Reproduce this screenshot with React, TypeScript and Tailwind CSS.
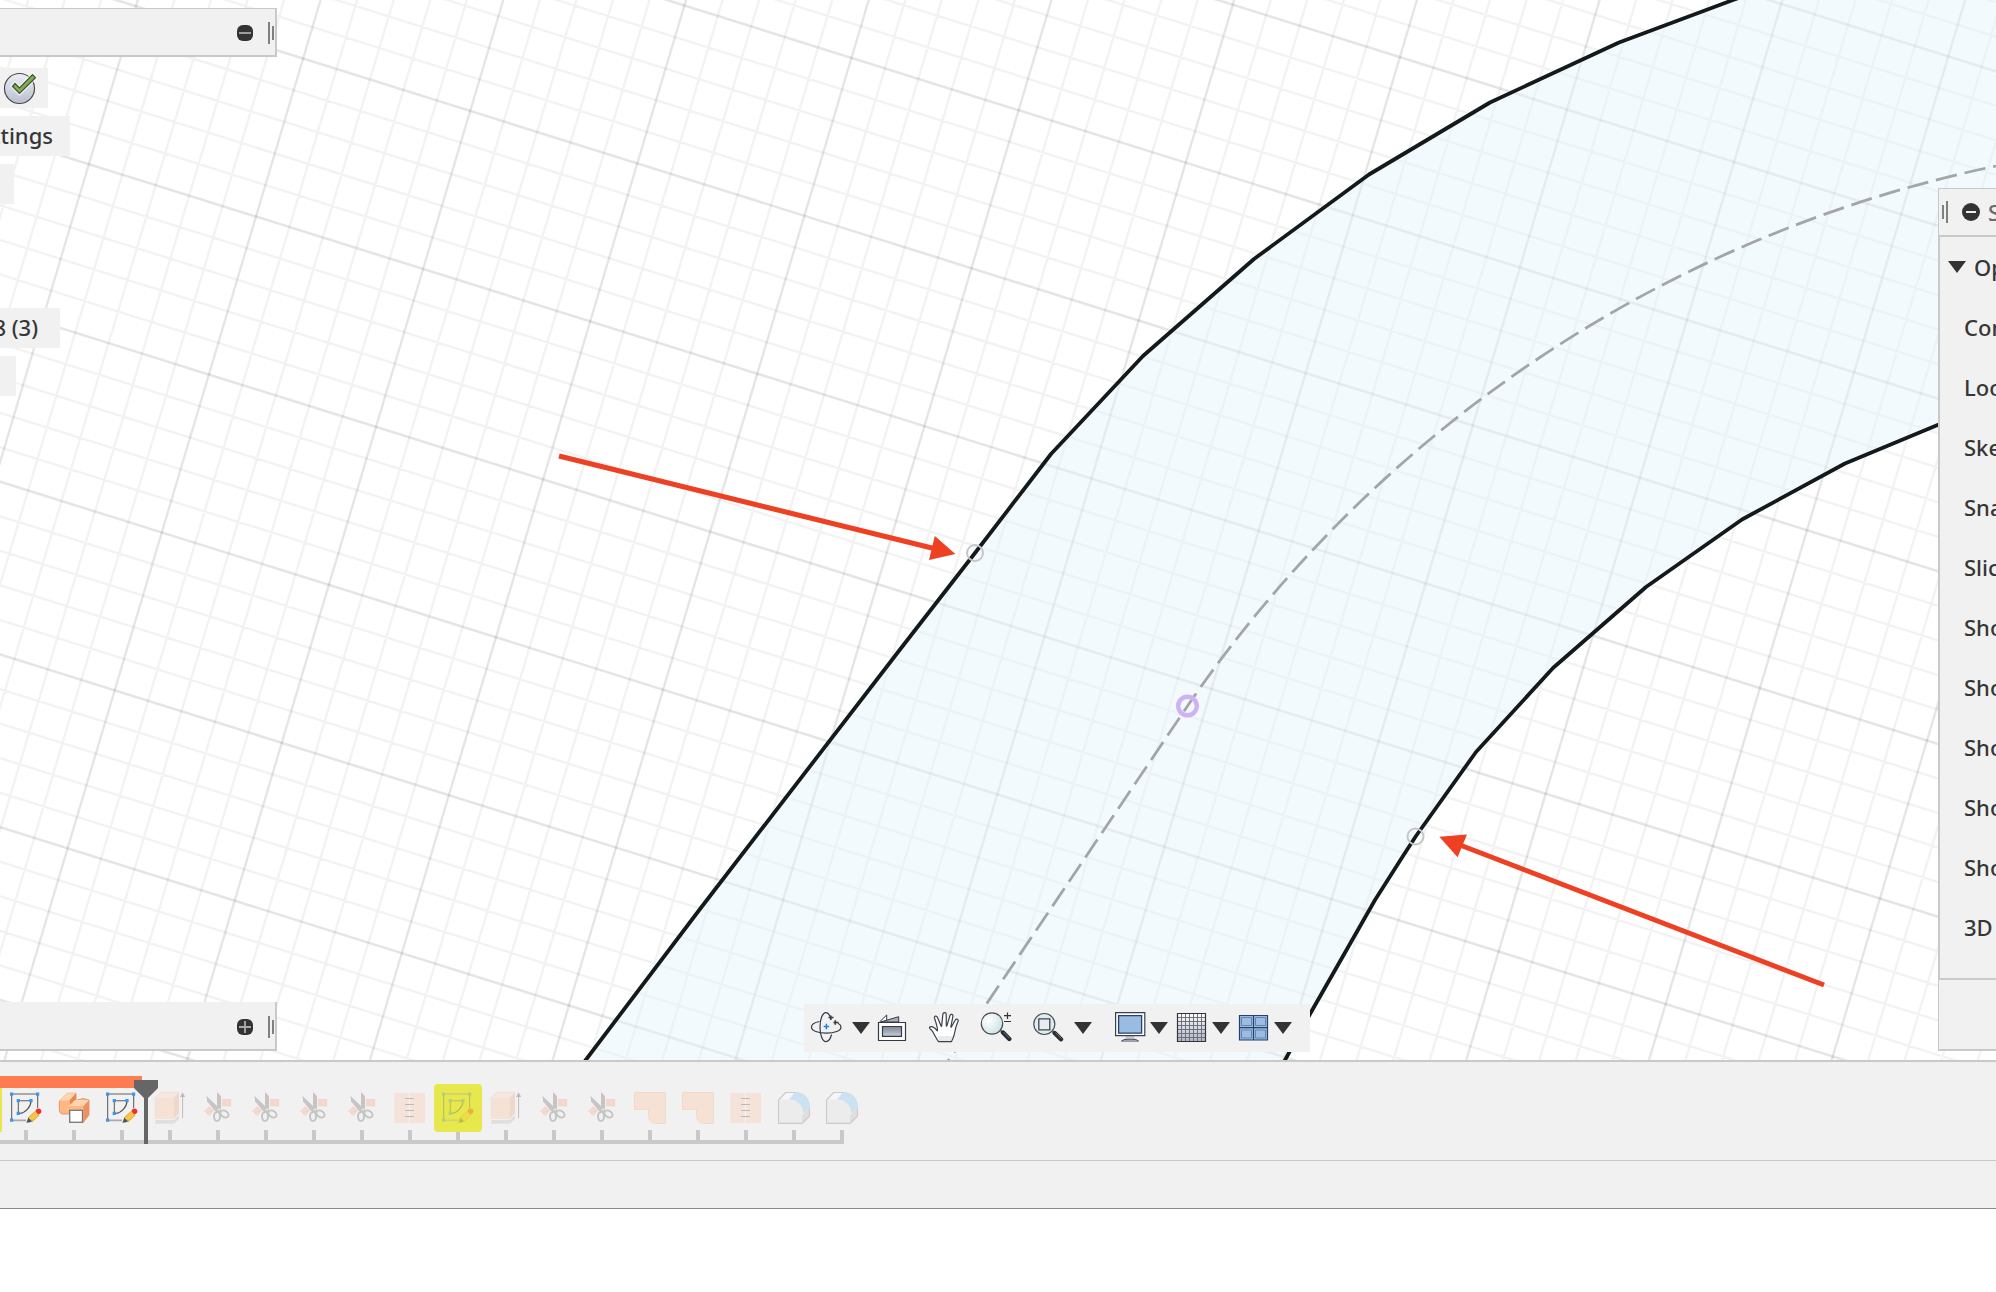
import React from 'react';
import clsx from 'clsx';

// Sketch plane: origin plus the two major grid vectors, in canvas pixels
const ORIGIN = [114.7, 690.4];
const U = [167.1, 52.4];
const V = [-47.1, 157.95];
const DIVISIONS = 5;

const gridPath = (step: number[], along: number[], major: boolean) => {
    let d = '';
    for (let i = -120; i <= 120; i++) {
        if ((i % DIVISIONS === 0) !== major) continue;
        const x = ORIGIN[0] + (step[0] * i) / DIVISIONS;
        const y = ORIGIN[1] + (step[1] * i) / DIVISIONS;
        d += `M${(x - along[0] * 24).toFixed(1)} ${(y - along[1] * 24).toFixed(1)}L${(x + along[0] * 24).toFixed(1)} ${(y + along[1] * 24).toFixed(1)}`;
    }
    return d;
};

const MINOR_GRID = gridPath(U, V, false) + gridPath(V, U, false);
const MAJOR_STEEP = gridPath(U, V, true);
const MAJOR_SHALLOW = gridPath(V, U, true);

const OUTER = '585,1061 700,909 900,649.5 975,553 1051,454 1143,356 1254,259 1369,174.5 1490,102.5 1619,42.5 1733,0 1800,-24';
const INNER = '1284,1062 1310,1014 1375,900 1403,856 1416,836 1476,752 1553,668 1646,587 1742,519.5 1845,463.5 1940,424 2010,396';
const INNER_REVERSED = INNER.split(' ').reverse().join(' ');

const SketchCanvas: React.FC = () => (
    <svg className="absolute inset-0 w-full h-full" aria-hidden="true">
        <g fill="none" stroke="#000">
            <path d={MINOR_GRID} strokeWidth="2.4" strokeOpacity="0.05" />
            <path d={MAJOR_STEEP} strokeWidth="2.4" strokeOpacity="0.1" />
            <path d={MAJOR_SHALLOW} strokeWidth="2.6" strokeOpacity="0.1" />
        </g>
        {/* Profile fill sits over the grid and softens it */}
        <polygon points={`${OUTER} 2100,-24 2100,396 ${INNER_REVERSED}`} fill="#e4f5fd" fillOpacity="0.45" />

        {/* Centre line */}
        <path
            d="M946 1064L1187.5 706A1302 1302 0 0 1 1996 166"
            fill="none"
            stroke="#a3a5a6"
            strokeWidth="2.8"
            strokeDasharray="21.5 7.9"
            strokeDashoffset="-14"
        />

        {/* Profile edges */}
        <g fill="none" stroke="#14191b" strokeWidth="3.8" strokeLinejoin="round">
            <polyline points={OUTER} />
            <polyline points={INNER} />
        </g>

        {/* Sketch points */}
        <g fill="none">
            <circle cx="975" cy="553" r="8" stroke="#c4c6c7" strokeWidth="2" />
            <circle cx="1415.5" cy="836.5" r="8" stroke="#c4c6c7" strokeWidth="2" />
            <circle cx="1187.5" cy="706" r="9.3" stroke="#cdb3f5" strokeWidth="4.4" />
        </g>

        {/* Annotation arrows */}
        <g fill="#ee4023" stroke="none">
            <path d="M559 456L934 548.5" stroke="#ee4023" strokeWidth="5" />
            <path d="M955.4 553.9L934.8 536L929 560Z" />
            <path d="M1824 985L1460 845" stroke="#ee4023" strokeWidth="5" />
            <path d="M1439.3 836.8L1467 834.6L1457.6 857.2Z" />
        </g>
    </svg>
);

/* ---------- Timeline icons ---------- */

const SketchIcon = () => (
    <svg viewBox="0 0 48 48" className="w-12 h-12">
        <path d="M11 10h24M11 36.3h13" stroke="#a9a9a9" strokeWidth="1.8" />
        <path d="M9.7 11v25M35.7 11v13M16.3 17v12" stroke="#555" strokeWidth="1" />
        <path d="M17 16.7h12" stroke="#777" strokeWidth="1.2" />
        <path d="M29 17c0 6-6 12-11.5 12.5" fill="none" stroke="#555" strokeWidth="1.2" />
        <path d="M8 8.5h3.2v3.2h-3.2zM34 8.5h3.2v3.2h-3.2zM8 34.6h3.2v3.2h-3.2zM14.7 15h3.2v3.2h-3.2zM27.4 15h3.2v3.2h-3.2zM14.7 27.7h3.2v3.2h-3.2z" fill="#3b97ee" />
        <circle cx="36.5" cy="27.2" r="2.8" fill="#f03030" />
        <path d="M26.2 33.8L33.2 27.4L37.2 31.2L30 37.8Z" fill="#fbc345" stroke="#c9902c" strokeWidth="0.7" />
        <path d="M26.2 33.8L30 37.2L28.4 38.2L24.4 38.8Z" fill="#555" />
    </svg>
);

const FormIcon = () => (
    <svg viewBox="0 0 48 48" className="w-12 h-12">
        <path d="M9.3 17L17.5 9.3H26V16.5L33 14.5L39 16V31L33.3 38.3L19 30H12Q9.3 29 9.3 26Z" fill="#ffb784" stroke="#e08a55" strokeWidth="0.8" />
        <path d="M9.3 16.5L17.5 9.3H26L19.5 16.5Z" fill="#ffd5b0" />
        <path d="M19.5 16.5L26 9.3V15.5L20.5 21Z" fill="#ea8650" />
        <path d="M19 22L25 16H38.5L33.5 22Z" fill="#ffd5b0" />
        <path d="M33.5 22L39 16.5V31L33.5 38Z" fill="#ee9160" />
        <rect x="19.7" y="26.3" width="12.8" height="12" fill="#fff" stroke="#777" strokeWidth="1.3" />
    </svg>
);

const ExtrudeIcon = () => (
    <svg viewBox="0 0 48 48" className="w-12 h-12">
        <path d="M9.3 13.7L14.5 8.3H33L27.5 13.7Z" fill="#f4e8e0" />
        <path d="M9.3 13.7H27.5V35H9.3Z" fill="#f5e2d6" />
        <path d="M27.5 13.7L33 8.3V29.5L27.5 35Z" fill="#f1d6ca" />
        <path d="M9.3 35V13.7L14.5 8.3H33" fill="none" stroke="#f0dccf" strokeWidth="0.8" />
        <path d="M9.3 36H28L33 31V35L28 39.7H9.3Z" fill="#dfdfdf" />
        <path d="M36.6 34V10" stroke="#c0c0c0" strokeWidth="1.1" />
        <path d="M34 13L36.6 8.3L39.2 13Z" fill="#bcbcbc" />
    </svg>
);

const TrimIcon = () => (
    <svg viewBox="0 0 48 48" className="w-12 h-12">
        <path d="M28.3 15.3h8.4v6.7h-8.4z" fill="#f0dacd" stroke="#ecd0c0" strokeWidth="0.6" />
        <path d="M10 27L15.3 22L20.3 26.5L15 32Z" fill="#f0dacd" />
        <path d="M12.7 12L27 26L25 29L21.5 27.5L13 17.3Z" fill="#c5c5c5" />
        <path d="M23 8.3L27 12V26L23 28Z" fill="#c5c5c5" />
        <ellipse cx="23" cy="32.5" rx="3" ry="4.6" fill="none" stroke="#c5c5c5" strokeWidth="2" />
        <ellipse cx="30.5" cy="30" rx="4.4" ry="3.1" transform="rotate(35 30.5 30)" fill="none" stroke="#c5c5c5" strokeWidth="2" />
        <circle cx="25" cy="25.5" r="1.2" fill="#e4e4e4" />
    </svg>
);

const StitchIcon = () => (
    <svg viewBox="0 0 48 48" className="w-12 h-12">
        <path d="M8 9h31v30h-31z" fill="#f5e2d8" />
        <path d="M23.5 9v30" stroke="#f8f4f1" strokeWidth="1" />
        <path d="M19 14.5h9M19 20.5h9M19 26.5h9M19 32.5h9" stroke="#b9bbbd" strokeWidth="1.1" />
    </svg>
);

const FlangeIcon = () => (
    <svg viewBox="0 0 48 48" className="w-12 h-12">
        <path d="M8.5 8.5H39.5V39.5H30Q22.5 38.5 22.5 31.5V25.5H8.5Z" fill="#f5e2d5" stroke="#f2d9c8" strokeWidth="1" />
    </svg>
);

const FilletIcon = () => (
    <svg viewBox="0 0 48 48" className="w-12 h-12">
        <path d="M8.5 16L15.7 8.5H26L20 15.5Q31 16 34 28L39.5 23V32L32.3 39.4H8.5Z" fill="#ececec" />
        <path d="M10 15.5L16 9H25L19.5 15.2Z" fill="#f6f6f6" />
        <path d="M32.3 31L39.5 24V32L32.3 39.4Z" fill="#dedede" />
        <path d="M25.5 8.5C34 8.5 39 14 39.7 22.7L34 28.5C32.5 20 27 15 20 15Z" fill="#cde2f0" stroke="#bcd8ea" strokeWidth="0.6" />
        <path d="M25.5 8.5H15.7L8.5 16V39.4H32.3L39.5 32V24" fill="none" stroke="#cacaca" strokeWidth="1.1" />
    </svg>
);

interface Feature {
    name: string;
    icon: React.FC;
    highlighted?: boolean;
}

const features: Feature[] = [
    { name: 'Sketch', icon: SketchIcon },
    { name: 'Form', icon: FormIcon },
    { name: 'Sketch', icon: SketchIcon },
    { name: 'Extrude', icon: ExtrudeIcon },
    { name: 'Trim', icon: TrimIcon },
    { name: 'Trim', icon: TrimIcon },
    { name: 'Trim', icon: TrimIcon },
    { name: 'Trim', icon: TrimIcon },
    { name: 'Stitch', icon: StitchIcon },
    { name: 'Sketch', icon: SketchIcon, highlighted: true },
    { name: 'Extrude', icon: ExtrudeIcon },
    { name: 'Trim', icon: TrimIcon },
    { name: 'Trim', icon: TrimIcon },
    { name: 'Flange', icon: FlangeIcon },
    { name: 'Flange', icon: FlangeIcon },
    { name: 'Stitch', icon: StitchIcon },
    { name: 'Fillet', icon: FilletIcon },
    { name: 'Fillet', icon: FilletIcon },
];

/* ---------- Navigation bar icons ---------- */

const OrbitIcon = () => (
    <svg viewBox="0 0 32 32" className="w-8 h-8" fill="none" stroke="#333a44" strokeWidth="1.2">
        <path d="M9.5 9.5C4.5 10.3 1.5 12.5 1.5 15.2C1.5 18.6 8 21.2 16.3 21.2S31 18.6 31 15.2C31 13.5 29.8 12.2 28 11.2" />
        <path d="M20 4.5C19 2 17.6 0.6 15.9 0.6C12.6 0.6 10 7 10 15.2S12.6 29.6 15.9 29.6C18.5 29.6 20.7 26 21.5 22.5" />
        <path d="M18.5 5.5h5M20.8 3.5v4.5M23.5 10.5h5M25.3 8.2v4.5" strokeWidth="1.6" />
        <path d="M13.7 14.5h5.4M16.4 11.8v5.4" stroke="#1f7fe8" strokeWidth="1.5" />
    </svg>
);

const LookAtIcon = () => (
    <svg viewBox="0 0 32 32" className="w-8 h-8" stroke="#333a44" strokeWidth="1.2">
        <defs>
            <linearGradient id="look" x1="0" y1="0" x2="0" y2="1">
                <stop offset="0" stopColor="#7d8694" />
                <stop offset="1" stopColor="#c9ced8" />
            </linearGradient>
        </defs>
        <path d="M3.5 10L10.7 3V8.5" fill="#fff" strokeWidth="1" />
        <path d="M4.5 10L22.7 4.7V10Z" fill="#a9afb9" strokeWidth="1" />
        <path d="M2.5 10.5h27v18h-27z" fill="#fff" />
        <path d="M6.5 14.5h19v9.8h-19z" fill="url(#look)" />
    </svg>
);

const PanIcon = () => (
    <svg viewBox="0 0 32 32" className="w-8 h-8">
        <path
            d="M10.5 29.6C8 26 6 22 4.5 19.3C3.5 17.8 1.2 16.8 1.5 15.3C2.5 13.8 6 14.5 9.3 18.8C9.8 17.5 8.5 12 6.5 6C6 4 8.6 3.3 9.4 5.3L13.2 14.3L13.6 14.2L14.9 2.2C15.2 0 18.2 0.2 18.2 2.3L18.3 14L18.8 14.1L22 3.5C22.7 1.5 25.2 2.3 24.9 4.3L22.8 15L23.2 15.2L27.3 8C28.5 6.3 30.7 7.5 30 9.3C28 14 27 18 26.6 21C26.2 24.5 24.5 26.5 23.5 29.6Z"
            fill="#fff"
            stroke="#3b4049"
            strokeWidth="1.2"
            strokeLinejoin="round"
        />
        <path d="M11.5 29h11.5l2-5h-15z" fill="#dfe1e6" opacity="0.7" />
    </svg>
);

const ZoomIcon = () => (
    <svg viewBox="0 0 32 32" className="w-8 h-8">
        <defs>
            <radialGradient id="lens" cx="0.35" cy="0.35" r="0.8">
                <stop offset="0" stopColor="#ffffff" />
                <stop offset="1" stopColor="#c6dfe0" />
            </radialGradient>
        </defs>
        <path d="M20 18L23 20.5" stroke="#777" strokeWidth="2" />
        <path d="M23 20.5L29.3 27" stroke="#262b33" strokeWidth="4.4" strokeLinecap="round" />
        <path d="M23.5 20L29.5 26.3" stroke="#69707c" strokeWidth="1" />
        <circle cx="12" cy="11.5" r="10.7" fill="url(#lens)" stroke="#4a4f57" strokeWidth="1.2" />
        <path d="M24 3.7h7M27.5 0.5v6.5M24 9.5h7" stroke="#333" strokeWidth="1.2" />
    </svg>
);

const FitIcon = () => (
    <svg viewBox="0 0 32 32" className="w-8 h-8">
        <path d="M20 19L23 21.5" stroke="#777" strokeWidth="2" />
        <path d="M22.7 21L29 27.3" stroke="#2b2d30" strokeWidth="4.4" strokeLinecap="round" />
        <path d="M23.5 20.7L29.5 26.6" stroke="#777" strokeWidth="1" />
        <circle cx="12.3" cy="12" r="10.5" fill="#dfeeee" stroke="#4a4f57" strokeWidth="1.2" />
        <path d="M6.8 6.8h11v11h-11z" fill="#e9ebf2" stroke="#3f444d" strokeWidth="1.3" />
    </svg>
);

const DisplayIcon = () => (
    <svg viewBox="0 0 32 32" className="w-8 h-8">
        <path d="M12 23.5H20L21 28H11Z" fill="#c9ccd2" />
        <path d="M7.5 29Q9 27.3 13 27.3H19Q23 27.3 24.5 29Z" fill="#fff" stroke="#444a55" strokeWidth="1" />
        <path d="M1.6 0.6h29.2v23h-29.2z" fill="#fff" stroke="#3a404b" strokeWidth="1.2" />
        <path d="M4.6 3.6h23v17.5h-23z" fill="#9bbce2" stroke="#24416f" strokeWidth="1.3" />
    </svg>
);

const GridIcon = () => (
    <svg viewBox="0 0 32 32" className="w-8 h-8">
        <defs>
            <linearGradient id="gridfill" x1="0" y1="0" x2="0" y2="1">
                <stop offset="0" stopColor="#ffffff" />
                <stop offset="1" stopColor="#aeb5c6" />
            </linearGradient>
        </defs>
        <path d="M1.5 1.5h28v28h-28z" fill="url(#gridfill)" stroke="#333" strokeWidth="1.2" />
        <path
            d="M5.5 2v27M9.5 2v27M13.5 2v27M17.5 2v27M21.5 2v27M25.5 2v27M2 5.5h27M2 9.5h27M2 13.5h27M2 17.5h27M2 21.5h27M2 25.5h27"
            stroke="#6e727b"
            strokeWidth="1"
        />
    </svg>
);

const ViewportsIcon = () => (
    <svg viewBox="0 0 32 32" className="w-8 h-8">
        <path d="M1.5 3.5h28v24.5h-28z" fill="#9dbce0" stroke="#24416f" strokeWidth="1.2" />
        <path d="M3.5 5.5h10v8h-10zM17.5 5.5h10v8h-10zM3.5 18h10v8h-10zM17.5 18h10v8h-10z" fill="none" stroke="#6285b4" strokeWidth="1" />
        <path d="M15.5 3.5v24.5M1.5 15.7h28" stroke="#24416f" strokeWidth="1.2" />
    </svg>
);

const IconButton: React.FC<{ label: string; className?: string; children: React.ReactNode }> = ({ label, className, children }) => (
    <button type="button" aria-label={label} className={clsx('shrink-0', className)}>
        {children}
    </button>
);

const DropArrow: React.FC<{ label: string; className?: string }> = ({ label, className }) => (
    <IconButton label={label} className={className}>
        <svg viewBox="0 0 18 12" className="w-[18px] h-3">
            <path d="M0 0h18L9 12z" fill="#333" />
        </svg>
    </IconButton>
);

const NavigationBar = () => (
    <div className="absolute bottom-2 left-[804px] h-12 pl-1.5 pr-[18px] flex items-center bg-[#f1f1f1]">
        <IconButton label="Orbit"><OrbitIcon /></IconButton>
        <DropArrow label="Orbit options" className="ml-2.5" />
        <IconButton label="Look at" className="ml-1.5"><LookAtIcon /></IconButton>
        <IconButton label="Pan" className="ml-5"><PanIcon /></IconButton>
        <IconButton label="Zoom" className="ml-5"><ZoomIcon /></IconButton>
        <IconButton label="Fit" className="ml-5"><FitIcon /></IconButton>
        <DropArrow label="Fit options" className="ml-2.5" />
        <IconButton label="Display settings" className="ml-[22px]"><DisplayIcon /></IconButton>
        <DropArrow label="Display options" className="ml-1" />
        <IconButton label="Grid and snaps" className="ml-2"><GridIcon /></IconButton>
        <DropArrow label="Grid options" className="ml-1" />
        <IconButton label="Viewports" className="ml-2"><ViewportsIcon /></IconButton>
        <DropArrow label="Viewport options" className="ml-1" />
    </div>
);

/* ---------- Left side: browser and comments ---------- */

const PanelToggle: React.FC<{ label: string; expanded: boolean }> = ({ label, expanded }) => (
    <button type="button" aria-label={label} className="shrink-0">
        <svg viewBox="0 0 16 16" className="w-4 h-4">
            <rect width="16" height="16" rx="6" fill="#333" />
            <path d={expanded ? 'M2 8h12' : 'M2 8h12M8 2v12'} stroke="#aaa" strokeWidth="1.8" />
        </svg>
    </button>
);

const SidePanelBar: React.FC<{ label: string; expanded: boolean; className?: string }> = ({ label, expanded, className }) => (
    <div className={clsx('w-[277px] h-[49px] pt-0.5 flex items-center justify-end pr-px bg-[#f1f1f1] border-r-2 border-b-2 border-[#c9c9c9]', className)}>
        <PanelToggle label={label} expanded={expanded} />
        <span className="ml-[15px] w-0.5 h-[22px] bg-[#808080]" />
        <span className="ml-0.5 w-0.5 h-3.5 bg-[#808080]" />
    </div>
);

const BrowserTree = () => (
    <div className="mt-[11px] flex flex-col items-start gap-2 text-[22px] leading-[38px] font-medium text-[#363636]">
        <div className="w-12 h-10 bg-[#f1f1f1]">
            <svg viewBox="0 0 48 40" className="w-12 h-10">
                <defs>
                    <linearGradient id="disc" x1="0" y1="0" x2="0" y2="1">
                        <stop offset="0" stopColor="#eceef3" />
                        <stop offset="1" stopColor="#b9bfd0" />
                    </linearGradient>
                </defs>
                <circle cx="19.5" cy="20.5" r="15" fill="url(#disc)" stroke="#4a4a4a" strokeWidth="1.2" />
                <path d="M12.5 18.5L15 15.5L19.5 20L32.5 6.5L35.5 9.7L19.5 25.5Z" fill="none" stroke="#fff" strokeOpacity="0.6" strokeWidth="4" />
                <path d="M15 15.5L19.5 20L32.5 6.5L35.5 9.7L19.5 25.5L12.5 18.5Z" fill="#7fb056" stroke="#40502f" strokeWidth="1.2" />
            </svg>
        </div>
        <div className="w-[70px] h-10 pr-[17px] flex justify-end overflow-hidden bg-[#f1f1f1]">Settings</div>
        <div className="w-3.5 h-10 bg-[#f1f1f1]" />
        <div className="w-0 h-10" />
        <div className="w-0 h-10" />
        <div className="w-[60px] h-10 pr-[22px] flex justify-end overflow-hidden whitespace-nowrap bg-[#f1f1f1]">8 (3)</div>
        <div className="w-4 h-10 bg-[#f1f1f1]" />
    </div>
);

/* ---------- Right side: sketch palette ---------- */

const paletteOptions = ['Construction', 'Look At', 'Sketch Grid', 'Snap', 'Slice', 'Show Profile', 'Show Points', 'Show Dimensions', 'Show Constraints', 'Show Projected', '3D Sketch'];

const SketchPalette = () => (
    <aside className="absolute top-[188px] right-0 w-[58px] overflow-hidden whitespace-nowrap bg-[#f1f1f1] text-[22px] font-medium text-[#363636]">
        <div className="h-[49px] flex items-center pl-[3px] border-t border-l border-b-2 border-[#c9c9c9]">
            <span className="shrink-0 w-0.5 h-3.5 bg-[#808080]" />
            <span className="shrink-0 ml-0.5 w-0.5 h-[22px] bg-[#808080]" />
            <button type="button" aria-label="Collapse palette" className="shrink-0 ml-3.5">
                <svg viewBox="0 0 18 18" className="w-[18px] h-[18px]">
                    <circle cx="9" cy="9" r="9" fill="#333" />
                    <path d="M4 9h10" stroke="#eee" strokeWidth="2" />
                </svg>
            </button>
            <span className="ml-2 text-[#6a6a6a]">SKETCH PALETTE</span>
        </div>
        <div className="pb-[21px] border-l-2 border-b-2 border-[#c9c9c9]">
            <button type="button" className="h-[60px] pl-2 flex items-center gap-2">
                <svg viewBox="0 0 18 12" className="shrink-0 w-[18px] h-3">
                    <path d="M0 0h18L9 12z" fill="#333" />
                </svg>
                Options
            </button>
            <ul>
                {paletteOptions.map((option) => (
                    <li key={option} className="h-[60px] pl-6 flex items-center">
                        {option}
                    </li>
                ))}
            </ul>
        </div>
        <div className="h-[71px] border-l border-b-2 border-[#c9c9c9]" />
    </aside>
);

/* ---------- Timeline ---------- */

const Timeline = () => (
    <div className="relative h-[100px] pt-[22px] overflow-hidden border-t-2 border-[#c9c9c9]">
        {/* Rolled-forward range */}
        <div className="absolute top-3.5 left-0 w-[142px] h-3 bg-[#ff7b50]" />
        <div className="flex">
            <div className="w-0.5 h-12 bg-[#e6e84d]" />
            {features.map(({ name, icon: Icon, highlighted }, index) => (
                <div key={index} className="flex flex-col items-center">
                    <button
                        type="button"
                        aria-label={name}
                        className={clsx('relative z-10 w-12 h-12', highlighted && 'rounded bg-[#e6e84d]')}
                    >
                        <span className={clsx('block', highlighted && 'opacity-30')}>
                            <Icon />
                        </span>
                    </button>
                    <span className="-mt-0.5 w-1 h-2.5 bg-[#c9c9c9]" />
                </div>
            ))}
        </div>
        <div className="w-[844px] h-1 bg-[#c9c9c9]" />

        {/* History marker */}
        <svg viewBox="0 0 24 64" className="absolute z-20 top-[18px] left-[134px] w-6 h-16">
            <path d="M0 0h24v8L14 18v46h-4V18L0 8z" fill="#666" />
        </svg>
    </div>
);

const App: React.FC = () => {
    return (
        <div className="min-h-screen flex flex-col bg-white font-['Noto_Sans','Open_Sans',sans-serif]">
            <main className="relative flex-1 flex flex-col justify-between overflow-hidden pt-2 pb-[9px]">
                <SketchCanvas />
                <div className="relative">
                    <SidePanelBar label="Collapse browser" expanded className="border-t" />
                    <BrowserTree />
                </div>
                <div className="relative">
                    <SidePanelBar label="Expand comments" expanded={false} />
                </div>
                <NavigationBar />
                <SketchPalette />
            </main>
            <footer className="mb-[83px] bg-[#f1f1f1]">
                <Timeline />
                <div className="h-12 border-t border-[#c9c9c9]" />
                <div className="h-px bg-[#8a8a8a]" />
            </footer>
        </div>
    );
};

export default App;
